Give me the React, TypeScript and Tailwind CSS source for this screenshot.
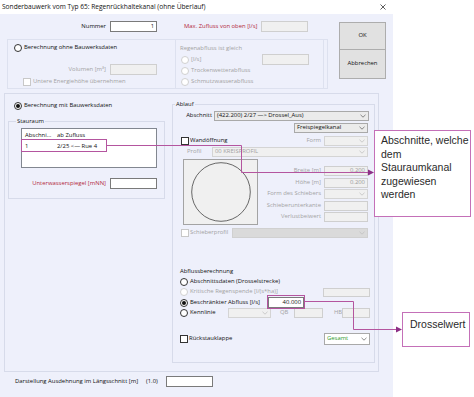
import React from 'react'

const GREY = 'text-[#a3a3a3]'
const RED = 'text-[#b3283c]'

function Field({ w, h = 10, value, disabled, className = '' }: { w: string; h?: number; value?: string; disabled?: boolean; className?: string }) {
  return (
    <div
      className={`${w} ${h === 11 ? 'h-[11px]' : h === 12 ? 'h-[12px]' : h === 9 ? 'h-[9px]' : 'h-[10px]'} shrink-0 border flex items-center justify-end px-[2px] leading-none ${
        disabled ? 'bg-[#f0f0f0] border-[#cfcfcf] text-[#9a9a9a]' : 'bg-white border-[#7a7a7a] text-[#111]'
      } ${className}`}
    >
      {value}
    </div>
  )
}

function Chevron({ c = '#707070' }: { c?: string }) {
  return (
    <svg width="6" height="4" viewBox="0 0 6 4" className="shrink-0">
      <path d="M0.5 0.8 L3 3.2 L5.5 0.8" fill="none" stroke={c} strokeWidth="0.8" />
    </svg>
  )
}

function Combo({ w, text, disabled, className = '' }: { w: string; text?: string; disabled?: boolean; className?: string }) {
  return (
    <div
      className={`${w} h-[10px] shrink-0 border flex items-center justify-between pl-[2px] pr-[2px] leading-none ${
        disabled ? 'bg-[#f0f0f0] border-[#d4d4d4] text-[#a0a0a0]' : 'bg-[#ebebeb] border-[#a9a9a9] text-[#111]'
      } ${className}`}
    >
      <span>{text}</span>
      <Chevron c={disabled ? '#c0c0c0' : '#6a6a6a'} />
    </div>
  )
}

function Radio({ checked, disabled }: { checked?: boolean; disabled?: boolean }) {
  return (
    <span
      className={`w-[8px] h-[8px] shrink-0 rounded-full border flex items-center justify-center ${
        disabled ? 'border-[#d0d0d0] bg-white' : 'border-[#333] bg-white'
      }`}
    >
      {checked && <span className="w-[4px] h-[4px] rounded-full bg-[#111]" />}
    </span>
  )
}

function Check({ disabled }: { disabled?: boolean }) {
  return <span className={`w-[8px] h-[8px] shrink-0 border bg-white ${disabled ? 'border-[#c8c8c8]' : 'border-[#333]'}`} />
}

export default function App() {
  return (
    <div className="relative w-[474px] h-[397px] bg-white overflow-hidden whitespace-nowrap font-['Open_Sans',sans-serif] text-[5.9px] text-[#111] leading-none">
      {/* title bar */}
      <div className="h-[14px] w-[393px] flex items-center justify-between pl-[2px] pr-[7px] text-[6.6px]">
        <span>Sonderbauwerk vom Typ 65: Regenrückhaltekanal (ohne Überlauf)</span>
        <svg width="6" height="6" viewBox="0 0 6 6">
          <path d="M0.5 0.5 L5.5 5.5 M5.5 0.5 L0.5 5.5" stroke="#333" strokeWidth="0.8" />
        </svg>
      </div>

      {/* dialog body */}
      <div className="w-[393px] h-[383px] bg-[#eef0fb] flex flex-col">
        {/* top section */}
        <div className="h-[79px] flex shrink-0">
          <div className="w-[339px] pt-[7px]">
            <div className="h-[11px] flex items-center">
              <span className="w-[106px] text-right">Nummer</span>
              <Field w="w-[47px] ml-[4px]" h={11} value="1" />
              <span className={`ml-[27px] w-[77px] ${RED}`}>Max. Zufluss von oben [l/s]</span>
              <Field w="w-[47px]" h={11} disabled />
            </div>

            <div className="mt-[7px] ml-[7px] w-[321px] h-[50px] border border-[#dde1ef] flex">
              <div className="w-[167px] flex flex-col">
                <div className="mt-[3px] h-[10px] flex items-center pl-[6px] gap-[2px]">
                  <Radio />
                  <span>Berechnung ohne Bauwerksdaten</span>
                </div>
                <div className="mt-[11px] h-[11px] flex items-center">
                  <span className={`w-[98px] text-right ${GREY}`}>Volumen [m³]</span>
                  <Field w="w-[47px] ml-[4px]" h={11} disabled />
                </div>
                <div className="mt-[2px] h-[9px] flex items-center pl-[15px] gap-[2px]">
                  <Check disabled />
                  <span className={GREY}>Untere Energiehöhe übernehmen</span>
                </div>
              </div>
              <div className="w-[149px] h-full border-l border-r border-[#dde1ef] flex flex-col">
                <div className={`mt-[4px] h-[10px] flex items-center pl-[4px] ${GREY}`}>Regenabfluss ist gleich</div>
                <div className="h-[11px] flex items-center pl-[5px] gap-[2px]">
                  <Radio disabled />
                  <span className={GREY}>[l/s]</span>
                  <Field w="w-[47px] ml-auto mr-[14px]" h={11} disabled />
                </div>
                <div className="h-[11px] flex items-center pl-[5px] gap-[2px]">
                  <Radio disabled />
                  <span className={GREY}>Trockenwetterabfluss</span>
                </div>
                <div className="h-[11px] flex items-center pl-[5px] gap-[2px]">
                  <Radio disabled />
                  <span className={GREY}>Schmutzwasserabfluss</span>
                </div>
              </div>
            </div>
          </div>

          <div className="pt-[8px] w-[47px] flex flex-col">
            <div className="h-[28px] bg-[#e1e1e1] border border-[#adadad] flex items-center justify-center">OK</div>
            <div className="h-[29px] bg-[#e1e1e1] border border-t-0 border-[#adadad] flex items-center justify-center">Abbrechen</div>
          </div>
        </div>

        {/* lower section */}
        <div className="ml-[4px] w-[375px] h-[279px] shrink-0 border border-[#d7dbea] flex">
          <div className="w-[166px] flex flex-col">
            <div className="mt-[7px] h-[10px] flex items-center pl-[9px] gap-[2px]">
              <Radio checked />
              <span>Berechnung mit Bauwerksdaten</span>
            </div>
            <fieldset className="mt-[5px] ml-[3px] w-[157px] border border-[#d7dbea] pb-[9px]">
              <legend className="ml-[7px] px-[1px] h-[10px] leading-[10px]">Stauraum</legend>
              <div className="mt-[2px] ml-[12px] w-[136px] h-[40px] bg-white border border-[#828790] flex flex-col">
                <div className="mt-[1px] h-[11px] flex items-center pl-[3px]">
                  <span className="w-[32px]">Abschni...</span>
                  <span>ab Zufluss</span>
                </div>
                <div className="h-[11px] flex items-center pl-[3px]">
                  <span className="w-[32px]">1</span>
                  <span>2/25 &lt;— Rue 4</span>
                </div>
              </div>
              <div className="mt-[10px] h-[11px] flex items-center">
                <span className={`w-[97px] text-right ${RED}`}>Unterwasserspiegel [mNN]</span>
                <Field w="w-[47px] ml-[4px]" h={11} />
              </div>
            </fieldset>
          </div>

          <fieldset className="mt-[5px] ml-[1px] w-[203px] h-[264px] border border-[#d7dbea] flex flex-col">
            <legend className="ml-[2px] px-[1px] h-[10px] leading-[10px]">Ablauf</legend>
            <div className="mt-[2px] h-[10px] flex items-center">
              <span className="w-[39px] text-right">Abschnitt</span>
              <Combo w="w-[155px] ml-[2px]" text="(422.200) 2/27 —> Drossel_Aus)" />
            </div>
            <div className="mt-[2px] h-[10px] flex items-center">
              <Combo w="w-[74px] ml-[121px]" text="Freispiegelkanal" />
            </div>
            <div className="mt-[3px] h-[10px] flex items-center">
              <span className="pl-[8px] flex items-center gap-[1px]">
                <Check />
                <span>Wandöffnung</span>
              </span>
              <span className={`ml-auto mr-[3px] ${GREY}`}>Form</span>
              <Combo w="w-[44px] mr-[6px]" disabled />
            </div>
            <div className="mt-[1px] h-[10px] flex items-center">
              <span className={`w-[39px] pl-[14px] ${GREY}`}>Profil</span>
              <Combo w="w-[156px]" text="00 KREISPROFIL" disabled />
            </div>
            <div className="mt-[2px] flex">
              <div className="ml-[10px] w-[75px] h-[66px] bg-[#f0f0f0] border border-[#a3a3a3] flex items-center justify-center">
                <svg width="62" height="62" viewBox="0 0 62 62">
                  <circle cx="31" cy="31" r="29.3" fill="none" stroke="#444" strokeWidth="0.8" />
                </svg>
              </div>
              <div className="ml-auto mr-[6px] pt-[7px] flex flex-col gap-[1.5px]">
                {[
                  ['Breite [m]', '0.200', 'f'],
                  ['Höhe [m]', '0.200', 'f'],
                  ['Form des Schiebers', '', 'c'],
                  ['Schieberunterkante', '', 'f'],
                  ['Verlustbeiwert', '', 'f'],
                ].map(([l, v, t]) => (
                  <div key={l} className="h-[10px] flex items-center justify-end">
                    <span className={`mr-[3px] ${GREY}`}>{l}</span>
                    {t === 'c' ? <Combo w="w-[44px]" disabled /> : <Field w="w-[44px]" value={v} disabled />}
                  </div>
                ))}
              </div>
            </div>
            <div className="mt-[3px] h-[10px] flex items-center">
              <span className="pl-[8px] flex items-center gap-[1px]">
                <Check disabled />
                <span className={GREY}>Schieberprofil</span>
              </span>
              <Combo w="w-[136px] ml-auto mr-[6px] !bg-[#dadada] !border-[#d0d0d0]" disabled />
            </div>

            <div className="mt-[29px] h-[10px] flex items-center pl-[7px]">Abflussberechnung</div>
            <div className="h-[10px] flex items-center pl-[7px] gap-[2px]">
              <Radio />
              <span>Abschnittsdaten (Drosselstrecke)</span>
            </div>
            <div className="h-[10px] flex items-center pl-[7px] gap-[2px]">
              <Radio disabled />
              <span className={GREY}>Kritische Regenspende [l/(s*ha)]</span>
              <Field w="w-[47px] ml-auto mr-[4px]" h={9} disabled />
            </div>
            <div className="h-[11px] flex items-center pl-[7px] gap-[2px]">
              <Radio checked />
              <span className="w-[76px]">Beschränkter Abfluss [l/s]</span>
              <Field w="w-[36px]" h={11} value="40.000" />
            </div>
            <div className="h-[10px] flex items-center pl-[7px]">
              <Radio />
              <span className="w-[40px] pl-[2px]">Kennlinie</span>
              <Combo w="w-[43px]" disabled />
              <span className={`ml-[9px] w-[14px] ${GREY}`}>QB</span>
              <Field w="w-[29px]" disabled />
              <span className={`ml-[11px] w-[8px] ${GREY}`}>HB</span>
              <Field w="w-[28px]" disabled />
            </div>
            <div className="mt-[15px] h-[12px] flex items-center pl-[7px] gap-[1px]">
              <Check />
              <span>Rückstauklappe</span>
              <div className="ml-auto mr-[4px] w-[46px] h-[12px] bg-white border border-[#a9a9a9] flex items-center justify-between px-[2px] text-[#2e9a2e]">
                <span>Gesamt</span>
                <Chevron />
              </div>
            </div>
          </fieldset>
        </div>

        {/* bottom row */}
        <div className="mt-[4px] h-[11px] flex items-center">
          <span className="ml-[15px] w-[131px]">Darstellung Ausdehnung im Längsschnitt [m]</span>
          <span className="w-[20px]">(1.0)</span>
          <Field w="w-[47px]" h={11} />
        </div>
      </div>

      {/* annotation lines */}
      <svg className="absolute left-0 top-0 pointer-events-none" width="474" height="397" viewBox="0 0 474 397">
        <rect x="21.5" y="139.5" width="85" height="12" fill="none" stroke="#b4559f" strokeWidth="1" />
        <path d="M106.5 145.5 H241.5 V172.5 H369" fill="none" stroke="#b4559f" strokeWidth="1" />
        <path d="M368 169.5 L374 172.5 L368 175.5 Z" fill="#8c2f86" />
        <rect x="267.5" y="295.5" width="37" height="13" fill="none" stroke="#b4559f" strokeWidth="1" />
        <path d="M304.5 301.5 H353.5 V329.5 H397" fill="none" stroke="#b4559f" strokeWidth="1" />
        <path d="M396 326.5 L402 329.5 L396 332.5 Z" fill="#8c2f86" />
      </svg>

      {/* callouts */}
      <div className="absolute left-[374px] top-[130px] w-[97px] h-[87px] bg-white border border-[#c470b8] pl-[6px] pt-[3px] font-['Liberation_Sans',sans-serif] text-[10.5px] leading-[13.6px] text-[#2a2a2a]">
        Abschnitte, welche
        <br />
        dem
        <br />
        Stauraumkanal
        <br />
        zugewiesen
        <br />
        werden
      </div>
      <div className="absolute left-[402px] top-[312px] w-[68px] h-[35px] bg-white border border-[#c470b8] pl-[7px] pt-[5px] font-['Liberation_Sans',sans-serif] text-[10.5px] leading-[13px] text-[#2a2a2a]">
        Drosselwert
      </div>
    </div>
  )
}
